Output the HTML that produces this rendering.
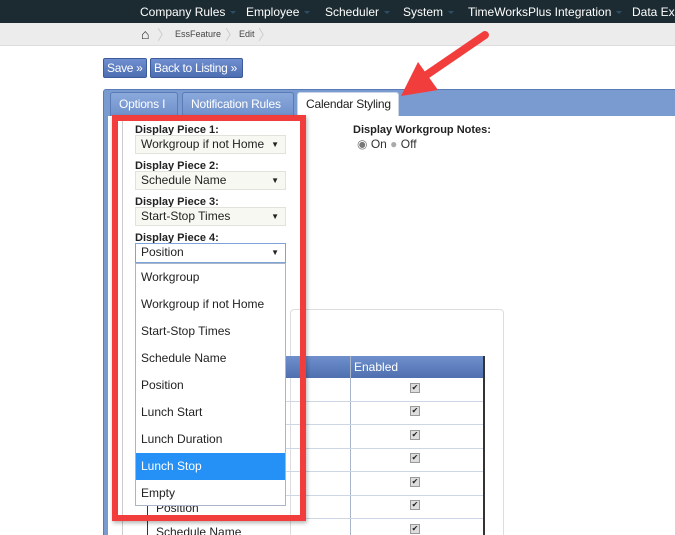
<!DOCTYPE html>
<html><head><style>
*{box-sizing:border-box;margin:0;padding:0}
html,body{width:675px;height:535px;overflow:hidden}
body{background:#fff;font-family:"Liberation Sans",sans-serif;position:relative;font-size:12px;color:#222}
.abs{position:absolute;white-space:nowrap}
.nav{left:0;top:0;width:675px;height:23px;background:#1c2b31;color:#fff;font-size:12px}
.nav span{position:absolute;top:5px;white-space:nowrap}
.nav span b{display:inline-block;width:0;height:0;border-left:3px solid transparent;border-right:3px solid transparent;border-top:3px solid #2d4f66;margin-left:5px;vertical-align:middle}
.bc{left:0;top:23px;width:675px;height:23px;background:#ececec;border-bottom:1px solid #ddd;font-size:9px;color:#444}
.btn{top:58px;height:20px;background:linear-gradient(#6f8fd0,#4e6eb3);border:1px solid #3d5a9a;border-radius:2px;color:#fff;font-size:12px;line-height:18px;padding:0 3px;letter-spacing:-0.3px}
.panel{left:103px;top:89px;width:580px;height:450px;background:#7a9bd0;border:1px solid #5a7ab8;border-radius:3px}
.tab{top:92px;height:25px;background:linear-gradient(#8aa9dc,#6f8fca);border:1px solid #5a7ab8;border-bottom:none;border-radius:3px 3px 0 0;color:#fff;font-size:12px;line-height:22px;padding:0 8px;letter-spacing:-0.2px}
.content{left:108px;top:116px;width:570px;height:420px;background:#fff}
.lbl{font-size:11px;font-weight:bold;color:#222;left:135px}
.sel{left:135px;width:151px;height:19px;background:#f8f8f3;border:1px solid #e2e2dc;font-size:12px;line-height:17px;padding-left:5px}
.sel:after{content:"▼";position:absolute;right:6px;top:0;font-size:8px}
.dd{left:135px;top:263px;width:151px;height:243px;background:#fff;border:1px solid #a9b6c9}
.dd div{height:27px;line-height:27px;padding-left:5px;font-size:12px}
.row{left:148px;width:335px;height:23.5px;border-bottom:1px solid #cdd6e5}
.cb{position:absolute;left:262px;top:5px;width:10px;height:10px;background:#ddd;border:1px solid #999;font-size:8px;line-height:8px;text-align:center}
</style></head><body>
<div class="abs nav">
<span style="left:140px">Company Rules<b></b></span>
<span style="left:246px">Employee<b></b></span>
<span style="left:325px">Scheduler<b></b></span>
<span style="left:403px">System<b></b></span>
<span style="left:468px">TimeWorksPlus Integration<b></b></span>
<span style="left:632px">Data Exc</span>
</div>
<div class="abs bc">
<span class="abs" style="left:141px;top:3px;font-size:14px;color:#222">⌂</span>
<span class="abs" style="left:157px;top:2px;color:#ccc;font-size:14px">〉</span>
<span class="abs" style="left:175px;top:6px">EssFeature</span>
<span class="abs" style="left:225px;top:2px;color:#ccc;font-size:14px">〉</span>
<span class="abs" style="left:239px;top:6px">Edit</span>
<span class="abs" style="left:258px;top:2px;color:#ccc;font-size:14px">〉</span>
</div>
<div class="abs btn" style="left:103px;width:44px">Save »</div>
<div class="abs btn" style="left:150px;width:93px">Back to Listing »</div>
<div class="abs panel"></div>
<div class="abs tab" style="left:110px;width:68px">Options I</div>
<div class="abs tab" style="left:182px;width:112px">Notification Rules</div>
<div class="abs tab" style="left:297px;width:102px;background:#fff;color:#222;border-color:#c9d4e6">Calendar Styling</div>
<div class="abs content"></div>
<div class="abs" style="left:122px;top:116px;width:1px;height:420px;background:#ccc"></div>
<div class="abs" style="left:290px;top:309px;width:214px;height:240px;border:1px solid #ddd;border-radius:4px"></div>
<div class="abs" style="left:147px;top:356px;width:337px;height:22px;background:linear-gradient(#6f90cc,#4f6fb0);color:#fff;font-size:12px;line-height:22px"><span style="position:absolute;left:207px">Enabled</span></div>
<div class="abs" style="left:350px;top:356px;width:1px;height:180px;background:#a9b6c9"></div>
<div class="abs" style="left:147px;top:378px;width:1px;height:160px;background:#333"></div>
<div class="abs" style="left:483px;top:356px;width:2px;height:180px;background:#333"></div>
<div class="abs row" style="top:378px"><span class="cb">✔</span></div>
<div class="abs row" style="top:401px"><span class="cb">✔</span></div>
<div class="abs row" style="top:425px"><span class="cb">✔</span></div>
<div class="abs row" style="top:448px"><span class="cb">✔</span></div>
<div class="abs row" style="top:472px"><span class="cb">✔</span></div>
<div class="abs row" style="top:495px"><span style="position:absolute;left:8px;top:6px">Position</span><span class="cb">✔</span></div>
<div class="abs row" style="top:519px"><span style="position:absolute;left:8px;top:6px">Schedule Name</span><span class="cb">✔</span></div>
<div class="abs lbl" style="top:124px">Display Piece 1:</div>
<div class="abs sel" style="top:135px">Workgroup if not Home</div>
<div class="abs lbl" style="top:160px">Display Piece 2:</div>
<div class="abs sel" style="top:171px">Schedule Name</div>
<div class="abs lbl" style="top:196px">Display Piece 3:</div>
<div class="abs sel" style="top:207px">Start-Stop Times</div>
<div class="abs lbl" style="top:232px">Display Piece 4:</div>
<div class="abs sel" style="top:243px;height:20px;background:#fff;border-color:#7ea3d8">Position</div>
<div class="abs dd">
<div>Workgroup</div><div>Workgroup if not Home</div><div>Start-Stop Times</div><div>Schedule Name</div><div>Position</div><div>Lunch Start</div><div>Lunch Duration</div><div style="background:#2590f5;color:#fff">Lunch Stop</div><div>Empty</div>
</div>
<div class="abs lbl" style="left:353px;top:124px">Display Workgroup Notes:</div>
<div class="abs" style="left:357px;top:137px;font-size:12px;color:#333"><span style="color:#777">◉</span> On <span style="color:#aaa">●</span> Off</div>
<div class="abs" style="left:112px;top:115px;width:194px;height:406px;border:6px solid #f23d3d;box-shadow:1px 2px 4px rgba(0,0,0,.3)"></div>
<svg class="abs" style="left:0;top:0" width="675" height="535"><line x1="485" y1="35" x2="425" y2="76" stroke="#f23d3d" stroke-width="8" stroke-linecap="round"/><polygon points="401,96 418,62 438,90" fill="#f23d3d"/></svg>
</body></html>
